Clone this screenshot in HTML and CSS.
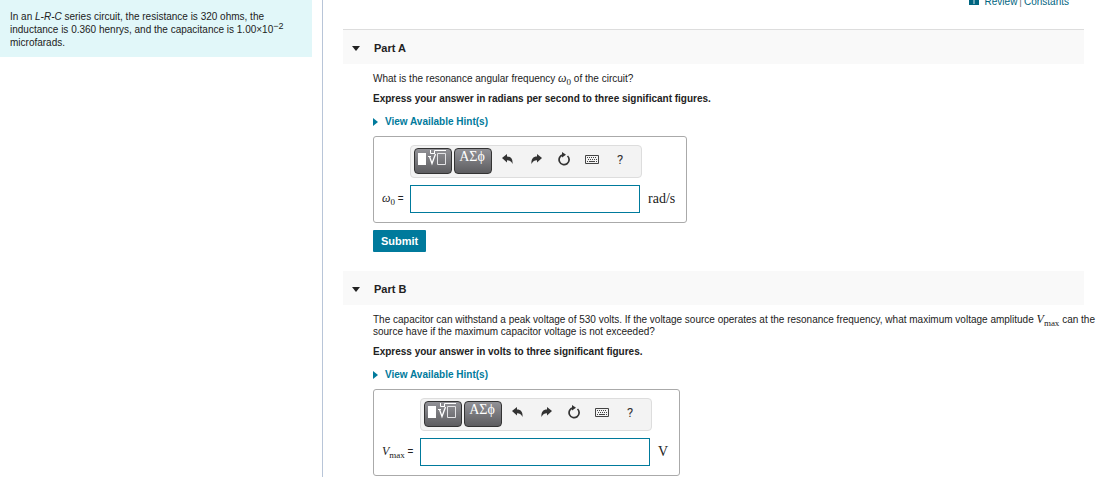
FILE: index.html
```html
<!DOCTYPE html>
<html lang="en">
<head>
    <meta charset="UTF-8">
    <meta name="viewport" content="width=device-width, initial-scale=1.0">
    <title>L-R-C Series Circuit</title>
    <link rel="stylesheet" href="styles.css">
</head>
<body>
    <svg class="sprite" aria-hidden="true">
        <symbol id="icon-book" viewBox="0 0 10 10">
            <path d="M0 0h4.6v9H0zM5.4 0H10v9H5.4zM0 9h10v1H0z"/>
        </symbol>
        <symbol id="icon-templates" viewBox="0 0 30 18">
            <path fill="#fff" d="M1 4h8v12H1z"/>
            <path fill="none" stroke="#e4e4e6" d="M20.500 4.500h8v11h-8z"/>
            <path fill="none" stroke="#fff" d="M11 7.500h3M13.500 1v3.500h4M17.500 5V1.500H29"/>
            <path fill="none" stroke="#fff" stroke-width="1.300" d="M12.500 7.500l2.500 7 3.500-9.500"/>
        </symbol>
        <symbol id="icon-undo" viewBox="0 0 12 12">
            <path d="M0 5L5 1v2.500c4 0 6 2.500 5.500 7.500C9.500 8.500 8 7.200 5 7.200V9.500z"/>
        </symbol>
        <symbol id="icon-reset" viewBox="0 0 14 14">
            <path fill="none" stroke="#333" stroke-width="1.700" d="M10.500 4A5 5 0 1 1 6 2.800"/>
            <path d="M5 0l4 2.800-4 2.700z"/>
        </symbol>
        <symbol id="icon-keyboard" viewBox="0 0 14 9">
            <path fill="none" stroke="#444" d="M.5.5h13v8H.5z"/>
            <path fill="none" stroke="#444" stroke-dasharray="1 1" d="M2 2.500h10M3 4.500h9"/>
            <path fill="none" stroke="#444" d="M2 6.500h1M4 6.500h6M11 6.500h1"/>
        </symbol>
    </svg>

    <div class="page">
        <aside class="intro">
            <p class="intro-text">In an <i>L-R-C</i> series circuit, the resistance is 320 ohms, the inductance is 0.360 henrys, and the capacitance is 1.00×10<sup>−2</sup> microfarads.</p>
        </aside>

        <main class="content">
            <nav class="top-links">
                <svg class="book"><use href="#icon-book"/></svg>
                <a href="#review">Review</a> | <a href="#constants">Constants</a>
            </nav>

            <section class="part">
                <h2 class="part-title part-title-first"><span class="caret-down"></span>Part A</h2>
                <div class="part-body">
                    <p class="question">What is the resonance angular frequency <span class="math"><i>ω</i><sub>0</sub></span> of the circuit?</p>
                    <p class="instruction">Express your answer in radians per second to three significant figures.</p>
                    <a class="hints" href="#hints-a"><span class="caret-right"></span>View Available Hint(s)</a>
                    <form>
                        <div class="answer">
                            <div class="toolbar">
                                <button type="button" class="palette" aria-label="Templates"><svg class="templates"><use href="#icon-templates"/></svg></button>
                                <button type="button" class="palette">ΑΣϕ</button>
                                <button type="button" class="tool" aria-label="Undo"><svg class="arrow"><use href="#icon-undo"/></svg></button>
                                <button type="button" class="tool" aria-label="Redo"><svg class="arrow redo"><use href="#icon-undo"/></svg></button>
                                <button type="button" class="tool" aria-label="Reset"><svg class="reset"><use href="#icon-reset"/></svg></button>
                                <button type="button" class="tool" aria-label="Keyboard shortcuts"><svg class="keyboard"><use href="#icon-keyboard"/></svg></button>
                                <button type="button" class="tool">?</button>
                            </div>
                            <label for="omega"><span class="math"><i>ω</i><sub>0</sub></span> =</label>
                            <input type="text" id="omega" name="omega">
                            <span class="unit">rad/s</span>
                        </div>
                        <button type="submit" class="submit">Submit</button>
                    </form>
                </div>
            </section>

            <section class="part">
                <h2 class="part-title"><span class="caret-down"></span>Part B</h2>
                <div class="part-body">
                    <p class="question">The capacitor can withstand a peak voltage of 530 volts. If the voltage source operates at the resonance frequency, what maximum voltage amplitude <span class="math"><i>V</i><sub>max</sub></span> can the source have if the maximum capacitor voltage is not exceeded?</p>
                    <p class="instruction">Express your answer in volts to three significant figures.</p>
                    <a class="hints" href="#hints-b"><span class="caret-right"></span>View Available Hint(s)</a>
                    <form>
                        <div class="answer answer-wide-label">
                            <div class="toolbar">
                                <button type="button" class="palette" aria-label="Templates"><svg class="templates"><use href="#icon-templates"/></svg></button>
                                <button type="button" class="palette">ΑΣϕ</button>
                                <button type="button" class="tool" aria-label="Undo"><svg class="arrow"><use href="#icon-undo"/></svg></button>
                                <button type="button" class="tool" aria-label="Redo"><svg class="arrow redo"><use href="#icon-undo"/></svg></button>
                                <button type="button" class="tool" aria-label="Reset"><svg class="reset"><use href="#icon-reset"/></svg></button>
                                <button type="button" class="tool" aria-label="Keyboard shortcuts"><svg class="keyboard"><use href="#icon-keyboard"/></svg></button>
                                <button type="button" class="tool">?</button>
                            </div>
                            <label for="vmax"><span class="math"><i>V</i><sub>max</sub></span> =</label>
                            <input type="text" id="vmax" name="vmax">
                            <span class="unit">V</span>
                        </div>
                    </form>
                </div>
            </section>
        </main>
    </div>
</body>
</html>
```
FILE: styles.css
```css
* {
    box-sizing: border-box;
}
body {
    margin: 0;
    font-family: "Liberation Sans", Arial, sans-serif;
    font-size: 10px;
    line-height: 12px;
    color: #222;
    background: #fff;
}
p, h2 {
    margin: 0;
}
a {
    color: #006581;
    text-decoration: none;
}
sup, sub {
    line-height: 0;
}
.sprite {
    display: none;
}
.page {
    display: flex;
    min-height: 100vh;
}
.intro {
    flex: 0 0 323px;
    padding-right: 10px;
    border-right: 1px solid #b8c5d8;
}
.intro-text {
    padding: 10px 20px 8px 10px;
    line-height: 13px;
    background: #e1f7f9;
}
.intro-text sup {
    font-size: 9px;
}
.content {
    flex: 1;
    min-width: 0;
    padding: 0 15px 0 20px;
}

/* Review / constants links */
.top-links {
    display: flex;
    justify-content: flex-end;
    gap: 2px;
    height: 29px;
    padding-right: 15px;
    line-height: 4px;
    color: #777;
}
.book {
    width: 10px;
    height: 10px;
    margin: -5px 4px 0 0;
    fill: #006581;
}

/* Parts */
.part-title {
    display: flex;
    align-items: center;
    height: 34px;
    padding: 2px 0 0 9px;
    font-size: 11px;
    background: #f9f9f9;
}
.part-title-first {
    height: 35px;
    border-top: 1px solid #ddd;
}
.caret-down {
    margin-right: 14px;
    border: 4px solid transparent;
    border-top: 5px solid #222;
    border-bottom: 0;
}
.part-body {
    padding: 9px 0 19px 30px;
}
.question {
    margin: 0 -15px 8px 0;
}
.instruction {
    margin-bottom: 11px;
    font-weight: bold;
}
.hints {
    display: flex;
    align-items: center;
    margin-bottom: 8px;
    font-weight: bold;
    color: #007a9c;
}
.caret-right {
    margin-right: 7px;
    border: 4px solid transparent;
    border-left: 5px solid #007a9c;
    border-right: 0;
}
.math {
    font-family: "Liberation Serif", "Times New Roman", serif;
    font-size: 12px;
    line-height: 0;
}
.math sub {
    font-size: 9px;
}

/* Answer box */
.answer {
    display: grid;
    grid-template-columns: 28px 232px auto;
    align-items: center;
    row-gap: 7px;
    width: fit-content;
    padding: 8px 11px 9px 8px;
    border: 1px solid #aaa;
    border-radius: 3px;
}
.answer-wide-label {
    grid-template-columns: 38px 232px auto;
}
.toolbar {
    grid-column: 2;
    display: flex;
    height: 33px;
    padding: 2px 3px;
    background: #f3f3f3;
    border: 1px solid #ddd;
    border-radius: 4px;
}
.palette {
    width: 38px;
    height: 26px;
    margin-right: 2px;
    padding: 0 4px 9px 2px;
    font-family: "Liberation Serif", "Times New Roman", serif;
    font-size: 14px;
    line-height: 14px;
    color: #fff;
    background: linear-gradient(#929297, #5d5d60);
    border: 1px solid #333;
    border-radius: 4px;
}
.templates {
    display: block;
    width: 30px;
    height: 18px;
}
.tool {
    display: flex;
    align-items: center;
    justify-content: center;
    width: 28px;
    height: 22px;
    padding: 0;
    font-family: Roboto, sans-serif;
    font-size: 13px;
    color: #333;
    background: none;
    border: 0;
}
.tool svg {
    fill: #333;
}
.arrow {
    width: 12px;
    height: 12px;
}
.redo {
    transform: scaleX(-1);
}
.reset {
    width: 14px;
    height: 14px;
}
.keyboard {
    width: 14px;
    height: 9px;
}
.answer label {
    grid-column: 1;
    white-space: nowrap;
}
.answer input {
    width: 230px;
    height: 28px;
    padding: 0 4px;
    border: 1px solid #007a9c;
}
.unit {
    padding-left: 6px;
    font-family: "Liberation Serif", "Times New Roman", serif;
    font-size: 14px;
}
.submit {
    height: 22px;
    margin-top: 7px;
    padding: 0 8px;
    font-family: inherit;
    font-size: 11px;
    font-weight: bold;
    color: #fff;
    background: #007a9c;
    border: 0;
    border-radius: 1px;
}
```
